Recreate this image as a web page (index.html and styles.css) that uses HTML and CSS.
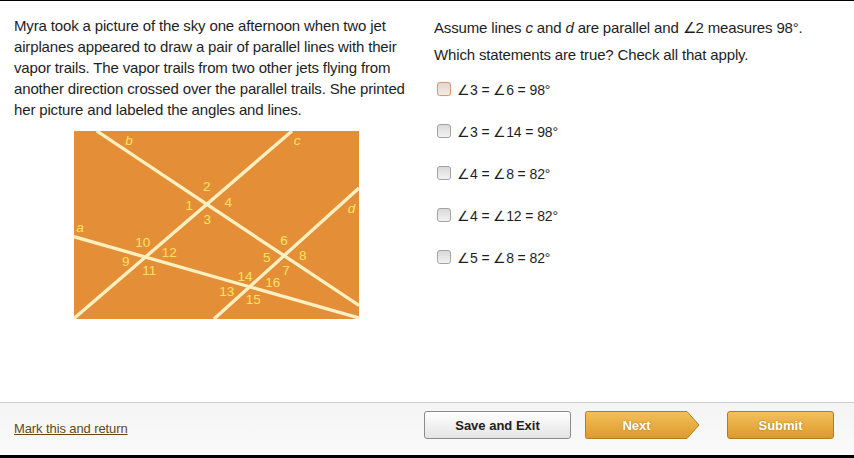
FILE: index.html
```html
<!DOCTYPE html>
<html>
<head>
<meta charset="utf-8">
<link rel="stylesheet" href="styles.css">
</head>
<body>
<div class="page">
  <div class="content">
    <div class="left">
      <p class="story">Myra took a picture of the sky one afternoon when two jet airplanes appeared to draw a pair of parallel lines with their vapor trails. The vapor trails from two other jets flying from another direction crossed over the parallel trails. She printed her picture and labeled the angles and lines.</p>
      <svg class="figure" width="285" height="188" viewBox="74 131 285 188">
        <rect x="74" y="131" width="285" height="188" fill="#e48f38"/>
        <g stroke="#fdf0c0" stroke-width="3.3" stroke-linecap="butt">
          <line x1="96.7" y1="131" x2="359" y2="305.5"/>
          <line x1="292" y1="131" x2="74" y2="318.5"/>
          <line x1="74" y1="236.7" x2="359" y2="318"/>
          <line x1="359" y1="188" x2="214" y2="319"/>
        </g>
        <g class="lbl" fill="#fae35e" text-anchor="middle" dominant-baseline="central">
          <text x="129" y="140" class="it">b</text>
          <text x="297" y="140" class="it">c</text>
          <text x="351.5" y="208.5" class="it">d</text>
          <text x="80" y="227.5" class="it">a</text>
          <text x="206.7" y="186.7">2</text>
          <text x="189.3" y="205">1</text>
          <text x="228.3" y="202.3">4</text>
          <text x="207.3" y="219">3</text>
          <text x="142.7" y="242.3">10</text>
          <text x="169.3" y="252.3">12</text>
          <text x="125.7" y="261.7">9</text>
          <text x="149.3" y="270.7">11</text>
          <text x="284" y="240">6</text>
          <text x="266.7" y="257.7">5</text>
          <text x="302.7" y="255">8</text>
          <text x="286" y="270.7">7</text>
          <text x="245" y="276.7">14</text>
          <text x="272.7" y="282.3">16</text>
          <text x="226.7" y="291">13</text>
          <text x="253.3" y="299.3">15</text>
        </g>
      </svg>
    </div>
    <div class="right">
      <p class="q">Assume lines <i>c</i> and <i>d</i> are parallel and ∠2 measures 98°.</p>
      <p class="q2">Which statements are true? Check all that apply.</p>
      <ul class="opts">
        <li><span class="cb focus"></span><span>∠3 = ∠6 = 98°</span></li>
        <li><span class="cb"></span><span>∠3 = ∠14 = 98°</span></li>
        <li><span class="cb"></span><span>∠4 = ∠8 = 82°</span></li>
        <li><span class="cb"></span><span>∠4 = ∠12 = 82°</span></li>
        <li><span class="cb"></span><span>∠5 = ∠8 = 82°</span></li>
      </ul>
    </div>
  </div>
  <div class="footer">
    <a class="mark" href="#">Mark this and return</a>
    <div class="buttons">
      <button class="btn save">Save and Exit</button>
      <button class="btn next">
        <svg class="next-shape" width="115" height="28" viewBox="0 0 115 28">
          <defs>
            <linearGradient id="og" x1="0" y1="0" x2="0" y2="1">
              <stop offset="0" stop-color="#f3c05a"/>
              <stop offset="1" stop-color="#dc9a2c"/>
            </linearGradient>
          </defs>
          <path d="M0.5 2.5 Q0.5 0.5 2.5 0.5 L102 0.5 L114 14 L102 27.5 L2.5 27.5 Q0.5 27.5 0.5 25.5 Z" fill="url(#og)" stroke="#b57c1d"/>
        </svg>
        <span class="next-label">Next</span>
      </button>
      <button class="btn submit">Submit</button>
    </div>
  </div>
</div>
</body>
</html>
```

FILE: styles.css
```css
html, body {
  margin: 0;
  padding: 0;
  background: #fff;
}
.page {
  width: 854px;
  height: 458px;
  box-sizing: border-box;
  border-top: 1px solid #000;
  border-bottom: 3px solid #000;
  display: flex;
  flex-direction: column;
  font-family: "Liberation Sans", Arial, sans-serif;
  color: #1e1e1e;
}
.content {
  flex: 1;
  display: flex;
}
.left {
  width: 420px;
  padding-left: 14px;
  box-sizing: border-box;
}
.story {
  margin: 14px 0 0 0;
  font-size: 15px;
  line-height: 21px;
  width: 400px;
  letter-spacing: -0.15px;
}
.figure {
  display: block;
  margin: 11px 0 0 60px;
}
.lbl text {
  font-family: "Liberation Sans", Arial, sans-serif;
  font-size: 13.5px;
}
.lbl .it {
  font-style: italic;
}
.right {
  padding-left: 14px;
  flex: 1;
}
.q, .q2 {
  margin: 0;
  font-size: 15px;
  line-height: 20px;
  letter-spacing: -0.15px;
}
.q { margin-top: 17px; }
.q2 { margin-top: 7px; }
.opts {
  list-style: none;
  margin: 15px 0 0 0;
  padding: 0;
}
.opts li {
  display: flex;
  align-items: center;
  height: 20px;
  margin-bottom: 22px;
  font-size: 14px;
  letter-spacing: -0.1px;
}
.cb {
  width: 12px;
  height: 12px;
  margin: 0 6px 0 3px;
  border: 1px solid #a3a3a3;
  border-radius: 3px;
  background: linear-gradient(#d9d9d9, #f2f2f2);
  position: relative;
  top: -1px;
}
.cb.focus {
  border-color: #d59a72;
  background: linear-gradient(#e2d6ce, #f3ebe6);
  box-shadow: 0 0 1px #e8b08a;
}
.footer {
  height: 53px;
  box-sizing: border-box;
  border-top: 1px solid #cfcfcf;
  background: linear-gradient(#f4f4f4, #fafafa);
  display: flex;
  align-items: flex-start;
  justify-content: space-between;
  padding: 8px 20px 0 14px;
}
.mark {
  margin-top: 10px;
  font-size: 13px;
  line-height: 15px;
  color: #5f4c14;
  text-decoration: underline;
  letter-spacing: -0.1px;
}
.buttons {
  display: flex;
  align-items: center;
}
.btn {
  height: 28px;
  font-family: "Liberation Sans", Arial, sans-serif;
  font-weight: bold;
  font-size: 13px;
  padding: 0;
  cursor: pointer;
}
.save {
  width: 147px;
  border: 1px solid #8b8b8b;
  border-radius: 3px;
  background: linear-gradient(#ffffff, #e4e4e4);
  color: #222;
}
.next {
  width: 115px;
  margin-left: 14px;
  border: none;
  background: transparent;
  position: relative;
  color: #fff;
}
.next-shape {
  position: absolute;
  left: 0;
  top: 0;
}
.next-label {
  position: relative;
  margin-right: 12px;
  text-shadow: 0 0 2px #a77316;
}
.submit {
  width: 107px;
  margin-left: 27px;
  border: 1px solid #b57c1d;
  border-radius: 3px;
  background: linear-gradient(#f3c05a, #dc9a2c);
  color: #fff;
  text-shadow: 0 0 2px #a77316;
}
```
